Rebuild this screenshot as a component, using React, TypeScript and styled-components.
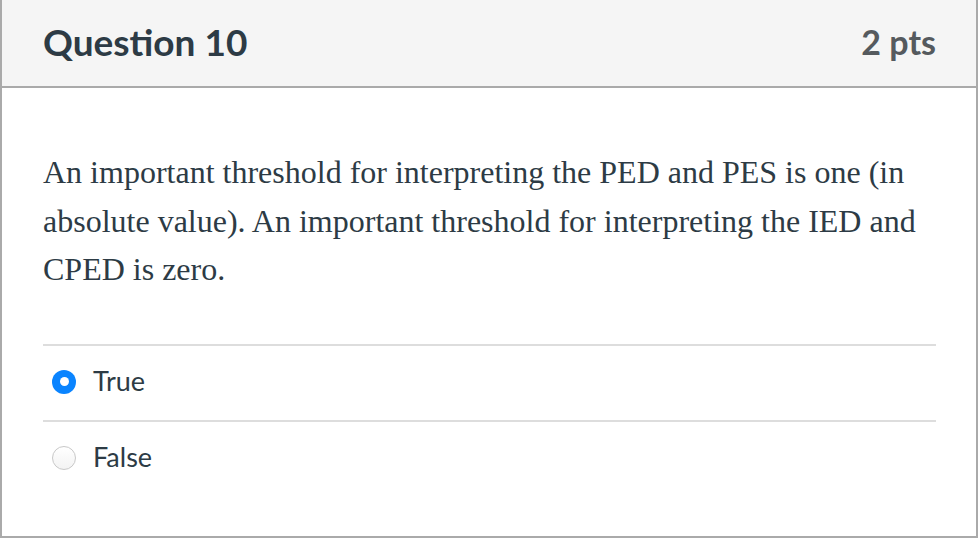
import React, { FC, useState } from 'react';
import styled, { createGlobalStyle } from 'styled-components';

const GlobalStyle = createGlobalStyle`
  html, body { margin: 0; padding: 0; background: #fff; }
  * { box-sizing: border-box; }
`;

type TAnswer = {
  id: string;
  label: string;
};

const answers: TAnswer[] = [
  { id: 'true', label: 'True' },
  { id: 'false', label: 'False' },
];

const Panel = styled.div`
  width: 978px;
  height: 538px;
  border: 2px solid #aaaaaa;
  border-top: none;
  background: #fff;
  display: flex;
  flex-direction: column;
`;

const Header = styled.div`
  height: 88px;
  flex-shrink: 0;
  background: #f5f5f5;
  border-bottom: 2px solid #aaaaaa;
  display: flex;
  align-items: center;
  justify-content: space-between;
  padding: 0 40px 4px 41px;
  font-family: Lato, 'Noto Sans', sans-serif;
`;

const Title = styled.h2`
  margin: 0;
  font-size: 37px;
  font-weight: 700;
  color: #2d3b45;
`;

const Points = styled.div`
  font-size: 34px;
  font-weight: 700;
  color: #555a5e;
`;

const Body = styled.div`
  padding: 60px 40px 0 41px;
`;

const QuestionText = styled.p`
  margin: 0 0 50px;
  font-family: 'Liberation Serif', 'Times New Roman', serif;
  font-size: 32px;
  line-height: 48.5px;
  color: #2d3b45;
`;

const AnswerRow = styled.label`
  display: flex;
  align-items: center;
  height: 76px;
  border-top: 2px solid #dddddd;
  padding: 0 0 4px 9px;
  font-family: Lato, 'Noto Sans', sans-serif;
  font-size: 27px;
  color: #2d3b45;
  cursor: pointer;
`;

const Radio = styled.span<{ checked: boolean }>`
  width: 24px;
  height: 24px;
  border-radius: 50%;
  margin-right: 17px;
  margin-top: 2px;
  flex-shrink: 0;
  display: flex;
  align-items: center;
  justify-content: center;
  background: ${({ checked }) => (checked ? '#0a84ff' : 'linear-gradient(#ffffff, #f3f3f3)')};
  border: ${({ checked }) => (checked ? 'none' : '1px solid #c8c8c8')};
  &::after {
    content: '';
    display: ${({ checked }) => (checked ? 'block' : 'none')};
    width: 9px;
    height: 9px;
    border-radius: 50%;
    background: #fff;
  }
`;

const App: FC = () => {
  const [selected, setSelected] = useState('true');

  return (
    <>
      <GlobalStyle />
      <Panel>
        <Header>
          <Title>Question 10</Title>
          <Points>2 pts</Points>
        </Header>
        <Body>
          <QuestionText>
            An important threshold for interpreting the PED and PES is one (in absolute value). An important threshold
            for interpreting the IED and CPED is zero.
          </QuestionText>
          {answers.map(a => (
            <AnswerRow key={a.id} onClick={() => setSelected(a.id)}>
              <Radio checked={selected === a.id} />
              {a.label}
            </AnswerRow>
          ))}
        </Body>
      </Panel>
    </>
  );
};

export default App;
